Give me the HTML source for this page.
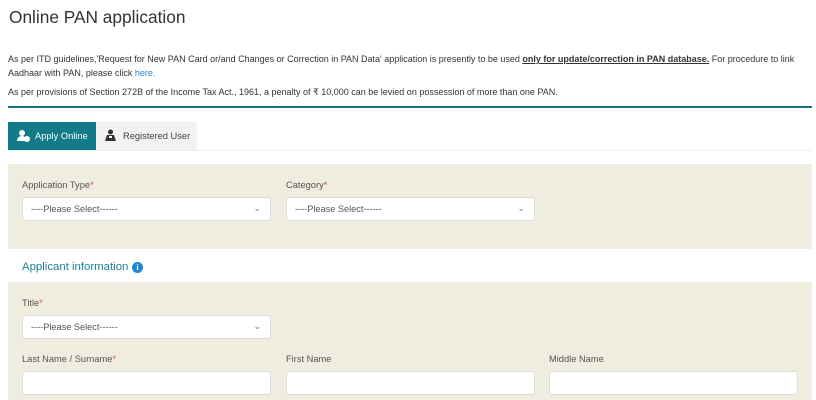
<!DOCTYPE html>
<html><head><style>
*{box-sizing:border-box;margin:0;padding:0}
body{width:816px;height:400px;overflow:hidden;background:#fff;font-family:"Liberation Sans",sans-serif;color:#333;position:relative}
.a{position:absolute;white-space:nowrap}
.lbl{font-size:9.3px;color:#555}
.lbl b{color:#d9534f;font-weight:normal}
.inp{position:absolute;width:249px;height:24px;background:#fff;border:1px solid #e0ded3;border-radius:3px;font-size:9.2px;color:#555;padding:6px 8px}
.inp i{position:absolute;right:9px;top:5px;font-style:normal;font-size:9px;color:#777}
.panel{position:absolute;left:8px;width:804px;background:#efede0}
</style></head><body>
<div class="a" style="left:9px;top:7px;font-size:17.3px;color:#333">Online PAN application</div>
<div class="a" style="left:8px;top:52px;font-size:9px;line-height:14px">As per ITD guidelines,'Request for New PAN Card or/and Changes or Correction in PAN Data' application is presently to be used <b style="text-decoration:underline">only for update/correction in PAN database.</b> For procedure to link<br>Aadhaar with PAN, please click <span style="color:#2a8bd3">here.</span></div>
<div class="a" style="left:8px;top:87px;font-size:9px">As per provisions of Section 272B of the Income Tax Act., 1961, a penalty of ₹ 10,000 can be levied on possession of more than one PAN.</div>
<div class="a" style="left:8px;top:106px;width:804px;height:2px;background:#15707e"></div>
<div class="a" style="left:8px;top:122px;width:88px;height:29px;background:#137a88;color:#fff;font-size:9.3px;padding:9px 0 0 27px">Apply Online</div>
<svg class="a" style="left:17px;top:129px" width="14" height="14" viewBox="0 0 14 14"><circle cx="5" cy="4" r="3" fill="#fff"/><path d="M0 12c0-4 3-5 5-5s3 1 3 2v3z" fill="#fff"/><circle cx="10" cy="10" r="3" fill="#fff"/></svg>
<div class="a" style="left:96px;top:122px;width:101px;height:29px;background:#f2f2f2;color:#444;font-size:9.3px;padding:9px 0 0 27px">Registered User</div>
<svg class="a" style="left:104px;top:129px" width="13" height="13" viewBox="0 0 13 13"><circle cx="6.5" cy="3" r="2.5" fill="#333"/><path d="M1 12l2-6h7l2 6z" fill="#333"/><rect x="5" y="7" width="3" height="2" fill="#fff"/></svg>
<div class="a" style="left:8px;top:150px;width:804px;height:1px;background:#eee"></div>
<div class="panel" style="top:164px;height:85px"></div>
<div class="a lbl" style="left:22px;top:180px">Application Type<b>*</b></div>
<div class="a lbl" style="left:286px;top:180px">Category<b>*</b></div>
<div class="inp" style="left:22px;top:197px">----Please Select------<i>⌄</i></div>
<div class="inp" style="left:286px;top:197px">----Please Select------<i>⌄</i></div>
<div class="a" style="left:22px;top:261px;font-size:11.4px;color:#1b7f92">Applicant information</div>
<div class="a" style="left:132px;top:262px;width:11px;height:11px;border-radius:50%;background:#1e87d6;color:#fff;font-size:8px;font-weight:bold;text-align:center;line-height:11px;font-family:'Liberation Serif',serif">i</div>
<div class="panel" style="top:282px;height:118px"></div>
<div class="a lbl" style="left:22px;top:298px">Title<b>*</b></div>
<div class="inp" style="left:22px;top:315px">----Please Select------<i>⌄</i></div>
<div class="a lbl" style="left:22px;top:354px">Last Name / Surname<b>*</b></div>
<div class="a lbl" style="left:286px;top:354px">First Name</div>
<div class="a lbl" style="left:549px;top:354px">Middle Name</div>
<div class="inp" style="left:22px;top:371px"></div>
<div class="inp" style="left:286px;top:371px"></div>
<div class="inp" style="left:549px;top:371px"></div>
</body></html>
